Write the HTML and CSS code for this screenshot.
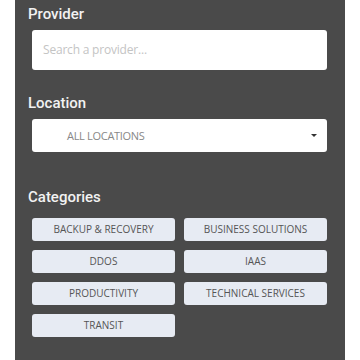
FILE: index.html
```html
<!DOCTYPE html>
<html>
<head>
<meta charset="utf-8">
<link rel="stylesheet" href="styles.css">
</head>
<body>
<div class="panel">
  <h2 class="title title-provider">Provider</h2>
  <div class="search">Search a provider...</div>
  <h2 class="title title-location">Location</h2>
  <div class="select">
    <span class="select-text">ALL LOCATIONS</span>
    <span class="caret"></span>
  </div>
  <h2 class="title title-categories">Categories</h2>
  <div class="cats">
    <div class="cat">BACKUP &amp; RECOVERY</div>
    <div class="cat">BUSINESS SOLUTIONS</div>
    <div class="cat">DDOS</div>
    <div class="cat">IAAS</div>
    <div class="cat">PRODUCTIVITY</div>
    <div class="cat">TECHNICAL SERVICES</div>
    <div class="cat">TRANSIT</div>
  </div>
</div>
</body>
</html>
```
FILE: styles.css
```css
html, body {
  margin: 0;
  padding: 0;
  background: #ffffff;
}
body {
  font-family: "Open Sans", "Liberation Sans", sans-serif;
}
.panel {
  margin: 0 15px;
  background: #4a4a4a;
  height: 360px;
  padding: 4px 18px 0 17px;
  box-sizing: border-box;
}
.title {
  margin: 0 0 0 -4px;
  font-family: Roboto, "Open Sans", sans-serif;
  font-size: 15px;
  line-height: 20px;
  font-weight: 500;
  color: #f2f2f2;
}
.search {
  margin-top: 6px;
  height: 40px;
  background: #fff;
  border-radius: 3px;
  box-sizing: border-box;
  padding-left: 11px;
  line-height: 40px;
  font-size: 12px;
  letter-spacing: -0.2px;
  color: #c4c4c4;
}
.title-location { margin-top: 23px; }
.select {
  margin-top: 6px;
  height: 33px;
  background: #fff;
  border-radius: 3px;
  display: flex;
  align-items: center;
  justify-content: space-between;
  padding: 0 10px 0 35px;
  box-sizing: border-box;
}
.select-text {
  font-size: 11px;
  color: #888;
  font-weight: 400;
  letter-spacing: -0.3px;
}
.caret {
  width: 0;
  height: 0;
  border-left: 3px solid transparent;
  border-right: 3px solid transparent;
  border-top: 3px solid #333;
}
.title-categories { margin-top: 35px; }
.cats {
  margin-top: 11px;
  display: grid;
  grid-template-columns: 143px 143px;
  column-gap: 9px;
  row-gap: 9px;
}
.cat {
  height: 23px;
  background: #e7ebf3;
  border-radius: 3px;
  text-align: center;
  line-height: 23px;
  font-size: 10px;
  color: #555;
}
```
